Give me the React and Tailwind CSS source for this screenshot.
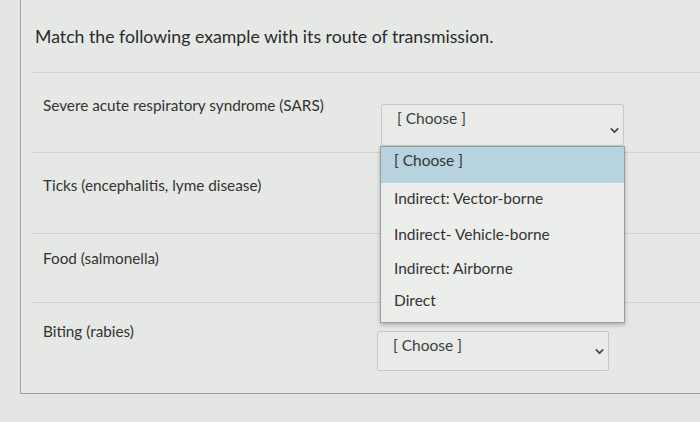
import { ChevronDown } from "lucide-react";

const rows = [
  { label: "Severe acute respiratory syndrome (SARS)", h: "h-[80px]", pad: "pt-[21px]", selPad: "pt-[31px]", open: true },
  { label: "Ticks (encephalitis, lyme disease)", h: "h-[81px]", pad: "pt-[21px]", selPad: "pt-[31px]", hidden: true },
  { label: "Food (salmonella)", h: "h-[69px]", pad: "pt-[13px]", selPad: "pt-[20px]", hidden: true },
  { label: "Biting (rabies)", h: "h-[91px]", pad: "pt-[17px]", selPad: "pt-[28px]", last: true },
];

const options = [
  { text: "[ Choose ]", cls: "h-[36px] pt-[3px] bg-[#b7d3df]" },
  { text: "Indirect: Vector-borne", cls: "h-[33px] pt-[5px]" },
  { text: "Indirect- Vehicle-borne", cls: "h-[35px] pt-[8px]" },
  { text: "Indirect: Airborne", cls: "h-[33px] pt-[7px]" },
  { text: "Direct", cls: "h-[38px] pt-[6px]" },
];

function Select({ open, last, hidden }) {
  return (
    <div className={`relative ${last ? "w-[232px] -ml-[4px]" : "w-[243px]"} ${hidden ? "invisible" : ""}`}>
      <div
        className={`flex items-center justify-between border border-[#c4c7c4] bg-[#e9ebe9] rounded-[2px] pl-[15px] pr-[2px] ${
          last ? "h-[40px]" : "h-[42px]"
        }`}
      >
        <span className={`text-[15.5px] text-[#3c3f3c] ${last ? "pb-[10px]" : "pb-[12px]"}`}>[ Choose ]</span>
        <ChevronDown size={13} strokeWidth={3} className={`text-[#444] ${last ? "mt-[0px]" : "mt-[10px]"}`} />
      </div>
      {open && (
        <div className="visible absolute -left-px -right-px top-[42px] z-10 border border-[#9a9d9a] bg-[#eceeec] shadow-[0_2px_4px_rgba(0,0,0,0.25)]">
          {options.map((o) => (
            <div key={o.text} className={`px-[13px] text-[15.5px] leading-[20px] text-[#333] ${o.cls}`}>
              {o.text}
            </div>
          ))}
        </div>
      )}
    </div>
  );
}

export default function App() {
  return (
    <div
      className="h-[422px] w-[700px] overflow-hidden bg-[#e3e5e2] text-[#2e302e]"
      style={{ fontFamily: "Lato, 'Open Sans', sans-serif" }}
    >
      <div className="ml-[20px] h-[394px] border-l border-b border-[#9fa29f] bg-[#e6e8e5]">
        <div className="h-[72px] pl-[14px] pt-[24px] text-[17.7px] leading-[26px] text-[#2a2c2a]">
          Match the following example with its route of transmission.
        </div>
        <div className="ml-[10px]">
          {rows.map((r) => (
            <div key={r.label} className={`flex border-t border-[#cfd2cf] ${r.h}`}>
              <div className={`w-[350px] pl-[12px] text-[15.3px] text-[#333] ${r.pad}`}>{r.label}</div>
              <div className={r.selPad}>
                <Select open={r.open} last={r.last} hidden={r.hidden} />
              </div>
            </div>
          ))}
        </div>
      </div>
    </div>
  );
}
